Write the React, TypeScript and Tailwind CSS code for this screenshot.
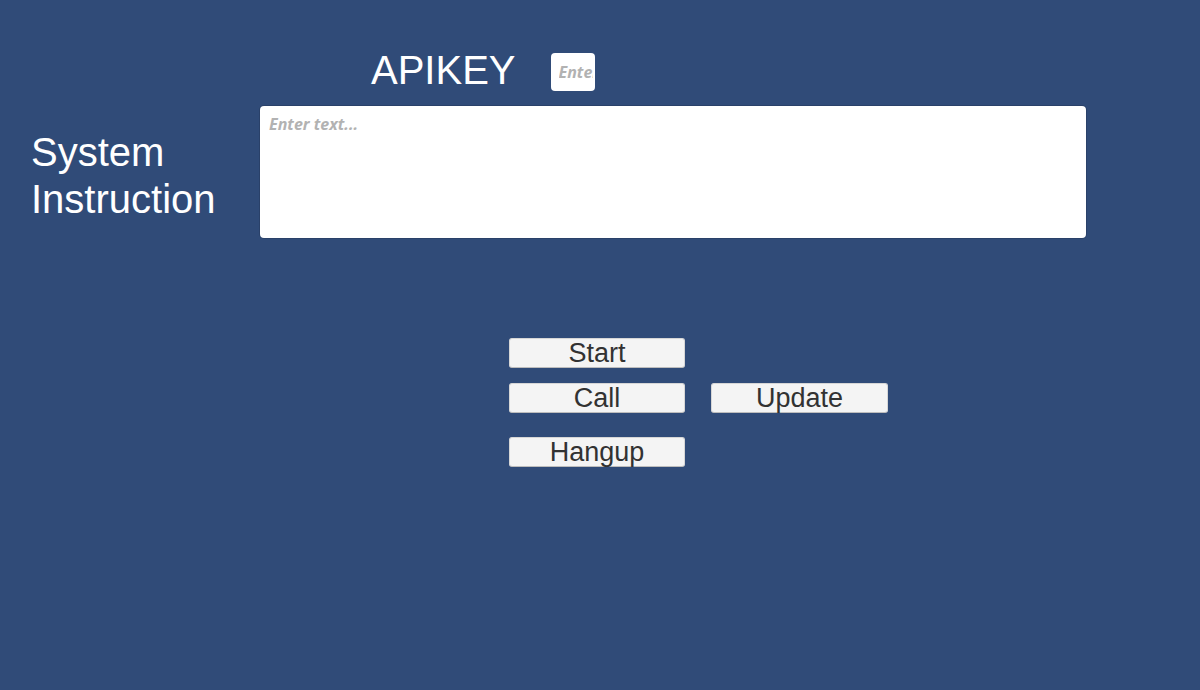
import React from "react";

const buttonClass =
  "h-[30px] w-[176px] rounded-[3px] bg-[#f4f4f4] border border-[#d6d6d6] border-b-[#bdbdbd] text-[#323232] text-[27px] leading-none flex items-center justify-center";

export default function App() {
  return (
    <div className="w-full h-[690px] bg-[#304b78] overflow-hidden font-['Liberation_Sans',Arial,sans-serif]">
      {/* API key row */}
      <div className="flex items-start pl-[371px] pt-[50px]">
        <span className="text-white text-[40px] leading-[40px]">APIKEY</span>
        <input
          type="text"
          placeholder="Enter text..."
          className="ml-[35px] mt-[3px] h-[38px] w-[44px] rounded-[4px] bg-white pl-[8px] pr-[2px] outline-none text-[16px] font-['Noto_Sans',sans-serif] placeholder:text-[#b2b2b2] placeholder:italic placeholder:font-bold"
        />
      </div>

      {/* System instruction row */}
      <div className="flex items-start mt-[15px]">
        <div className="w-[260px] pl-[31px] pt-[23px] text-white text-[40px] leading-[47px]">
          System
          <br />
          Instruction
        </div>
        <textarea
          placeholder="Enter text..."
          className="h-[132px] w-[826px] resize-none rounded-[4px] bg-white pl-[9px] pt-[7px] outline-none text-[16px] leading-[22px] font-['Noto_Sans',sans-serif] shadow-[0_0_0_1px_rgba(0,0,0,0.12)] placeholder:text-[#b2b2b2] placeholder:italic placeholder:font-bold"
        />
      </div>

      {/* Controls */}
      <div className="mt-[100px] pl-[509px] flex flex-col">
        <div className="flex">
          <button className={buttonClass}>Start</button>
        </div>
        <div className="flex gap-[26px] mt-[15px]">
          <button className={buttonClass}>Call</button>
          <button className={buttonClass + " w-[177px]"}>Update</button>
        </div>
        <div className="flex mt-[24px]">
          <button className={buttonClass}>Hangup</button>
        </div>
      </div>
    </div>
  );
}
